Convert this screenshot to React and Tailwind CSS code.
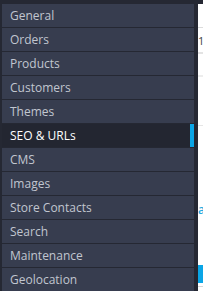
import React from 'react';

const items = [
  'General',
  'Orders',
  'Products',
  'Customers',
  'Themes',
  'SEO & URLs',
  'CMS',
  'Images',
  'Store Contacts',
  'Search',
  'Maintenance',
  'Geolocation',
];

const App = () => {
  const active = 'SEO & URLs';

  return (
    <div className="flex w-[203px] h-[291px] overflow-hidden bg-[#252833]" style={{ fontFamily: '"Open Sans", sans-serif' }}>
      <div className="w-[198px] shrink-0 pt-[4px] pl-[2px] pr-[4px] flex flex-col gap-[1px]">
        {items.map((item) => (
          <div
            key={item}
            className={
              item === active
                ? 'relative h-[23px] shrink-0 flex items-center pl-[8px] bg-[#232631] text-white text-[12px]'
                : 'h-[23px] shrink-0 flex items-center pl-[8px] bg-[#373d4f] text-[#c1c6cf] text-[12px]'
            }
          >
            {item}
            {item === active && (
              <span className="absolute right-0 top-0 h-full w-[4px] bg-[#0aa5e6]" />
            )}
          </div>
        ))}
      </div>

      {/* page content peeking in on the right */}
      <div className="flex-1 mt-[4px] bg-white flex flex-col">
        <div className="h-[23px]" />
        <div className="h-[1px] bg-[#dcdcdc]" />
        <div className="h-[8px]" />
        <div className="h-[10px] text-[11px] leading-[10px] text-[#444]">1</div>
        <div className="h-[6px]" />
        <div className="h-[2px] bg-[#e3e3e3]" />
        <div className="h-[21px]" />
        <div className="h-[2px] bg-[#ededed]" />
        <div className="h-[48px]" />
        <div className="h-[1px] bg-[#e6e6e6]" />
        <div className="h-[78px]" />
        <div className="h-[11px] text-[12px] leading-[11px] text-[#25a9e0] font-semibold">a</div>
        <div className="h-[50px]" />
        <div className="h-[18px] bg-[#0aa5e6]" />
        <div className="h-[3px]" />
        <div className="h-[1px] bg-[#d5d5d5]" />
      </div>
    </div>
  );
};

export default App;
